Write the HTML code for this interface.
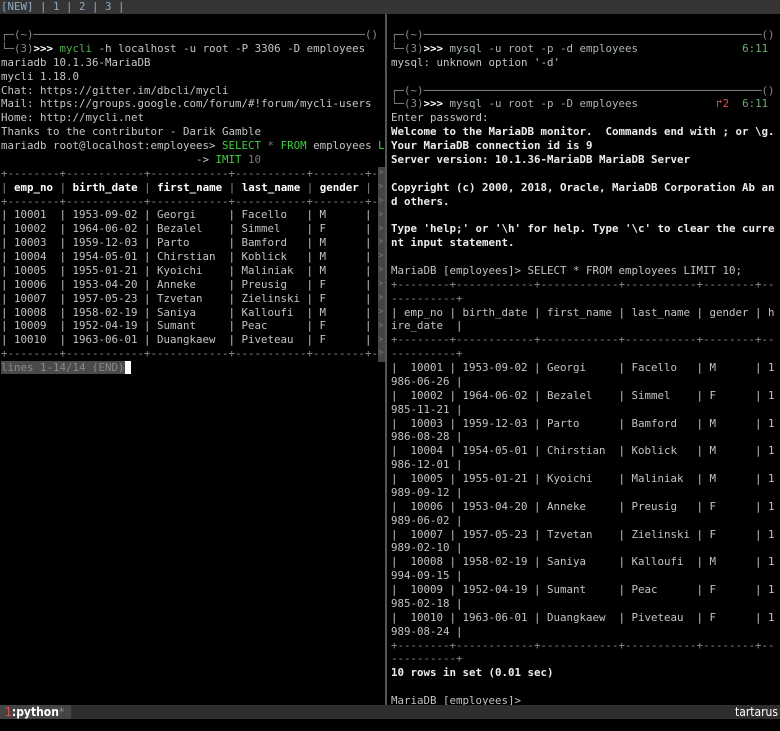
<!DOCTYPE html>
<html><head><meta charset="utf-8"><style>
html,body{margin:0;padding:0;background:#000;width:780px;height:731px;overflow:hidden}
body{position:relative;font-family:"DejaVu Sans Mono","Liberation Mono",monospace;font-size:10.8px;color:#c4c4c4}
pre{margin:0;font:inherit;line-height:13.88px;white-space:pre;position:absolute}
#top{position:absolute;left:0;top:0;width:780px;height:14px;background:#353535;color:#8fa8c0;line-height:14px;padding-left:1px;white-space:pre}
#left{left:1px;top:28px;width:383px;overflow:hidden}
#right{left:391px;top:28px}
.g{color:#8a8a8a}.w{color:#fff;font-weight:bold}.gr{color:#4fae4f}.sg{color:#3fd03f}.d{color:#7a7a7a}
.b{color:#ececec;font-weight:bold}.m{color:#a9b6ad}.r{color:#e05050}.t{color:#6cae6c}.tb{color:#8c8c8c}
#sb{position:absolute;left:378px;top:167px;width:7px;height:195px;background:#444;color:#777;font-size:9px;line-height:13.88px;overflow:hidden}
#div{position:absolute;left:385px;top:14px;width:2px;height:691px;background:#555}
#status{position:absolute;left:0;top:705px;width:780px;height:14px;background:#2e2e2e;line-height:14px;font-family:"DejaVu Sans Condensed","Liberation Sans Narrow",sans-serif;font-size:12px;color:#fff}
#seg{position:absolute;left:0;top:0;width:71px;height:14px;background:#444;padding-left:5px;box-sizing:border-box;font-weight:bold}
</style></head><body>
<div id="top">[NEW] | 1 | 2 | 3 |</div>
<pre id="left"><span class="g">┌─(~)───────────────────────────────────────────────────()</span>
<span class="g">└─(3)</span><span class="w">&gt;&gt;&gt;</span> <span class="gr">mycli</span> -h localhost -u root -P 3306 -D employees
mariadb 10.1.36-MariaDB
mycli 1.18.0
Chat: https://gitter.im/dbcli/mycli
Mail: https://groups.google.com/forum/#!forum/mycli-users
Home: http://mycli.net
Thanks to the contributor - Darik Gamble
mariadb root@localhost:employees&gt; <span class="sg">SELECT</span> <span class="d">*</span> <span class="sg">FROM</span> employees <span class="sg">L</span>
                              -&gt; <span class="sg">IMIT</span> <span class="d">10</span>
<span class="tb">+--------+------------+------------+-----------+--------+-</span>
<span class="tb">|</span> <span class="w">emp_no</span> <span class="tb">|</span> <span class="w">birth_date</span> <span class="tb">|</span> <span class="w">first_name</span> <span class="tb">|</span> <span class="w">last_name</span> <span class="tb">|</span> <span class="w">gender</span> <span class="tb">|</span>
<span class="tb">+--------+------------+------------+-----------+--------+-</span>
| 10001  | 1953-09-02 | Georgi     | Facello   | M      |
| 10002  | 1964-06-02 | Bezalel    | Simmel    | F      |
| 10003  | 1959-12-03 | Parto      | Bamford   | M      |
| 10004  | 1954-05-01 | Chirstian  | Koblick   | M      |
| 10005  | 1955-01-21 | Kyoichi    | Maliniak  | M      |
| 10006  | 1953-04-20 | Anneke     | Preusig   | F      |
| 10007  | 1957-05-23 | Tzvetan    | Zielinski | F      |
| 10008  | 1958-02-19 | Saniya     | Kalloufi  | M      |
| 10009  | 1952-04-19 | Sumant     | Peac      | F      |
| 10010  | 1963-06-01 | Duangkaew  | Piveteau  | F      |
<span class="tb">+--------+------------+------------+-----------+--------+-</span>
<span style="background:#4a4a4a;color:#8a8a8a">lines 1-14/14 (END)</span><span style="background:#fff"> </span></pre>
<div id="sb">&gt;<br>&gt;<br>&gt;<br>&gt;<br>&gt;<br>&gt;<br>&gt;<br>&gt;<br>&gt;<br>&gt;<br>&gt;<br>&gt;<br>&gt;<br>&gt;</div>
<div id="div"></div>
<pre id="right"><span class="g">┌─(~)────────────────────────────────────────────────────()</span>
<span class="g">└─(3)</span><span class="w">&gt;&gt;&gt;</span> <span class="m">mysql -u root -p -d employees</span>                <span class="t">6:11</span>
mysql: unknown option '-d'

<span class="g">┌─(~)────────────────────────────────────────────────────()</span>
<span class="g">└─(3)</span><span class="w">&gt;&gt;&gt;</span> <span class="m">mysql -u root -p -D employees</span>            <span class="r">↱2</span>  <span class="t">6:11</span>
Enter password:
<span class="b">Welcome to the MariaDB monitor.  Commands end with ; or \g.</span>
<span class="b">Your MariaDB connection id is 9</span>
<span class="b">Server version: 10.1.36-MariaDB MariaDB Server</span>

<span class="b">Copyright (c) 2000, 2018, Oracle, MariaDB Corporation Ab an</span>
<span class="b">d others.</span>

<span class="b">Type 'help;' or '\h' for help. Type '\c' to clear the curre</span>
<span class="b">nt input statement.</span>

MariaDB [employees]&gt; SELECT * FROM employees LIMIT 10;
<span class="tb">+--------+------------+------------+-----------+--------+--
----------+</span>
| emp_no | birth_date | first_name | last_name | gender | h
ire_date  |
<span class="tb">+--------+------------+------------+-----------+--------+--
----------+</span>
|  10001 | 1953-09-02 | Georgi     | Facello   | M      | 1
986-06-26 |
|  10002 | 1964-06-02 | Bezalel    | Simmel    | F      | 1
985-11-21 |
|  10003 | 1959-12-03 | Parto      | Bamford   | M      | 1
986-08-28 |
|  10004 | 1954-05-01 | Chirstian  | Koblick   | M      | 1
986-12-01 |
|  10005 | 1955-01-21 | Kyoichi    | Maliniak  | M      | 1
989-09-12 |
|  10006 | 1953-04-20 | Anneke     | Preusig   | F      | 1
989-06-02 |
|  10007 | 1957-05-23 | Tzvetan    | Zielinski | F      | 1
989-02-10 |
|  10008 | 1958-02-19 | Saniya     | Kalloufi  | M      | 1
994-09-15 |
|  10009 | 1952-04-19 | Sumant     | Peac      | F      | 1
985-02-18 |
|  10010 | 1963-06-01 | Duangkaew  | Piveteau  | F      | 1
989-08-24 |
<span class="tb">+--------+------------+------------+-----------+--------+--
----------+</span>
<span class="b">10 rows in set (0.01 sec)</span>

MariaDB [employees]&gt;</pre>
<div id="status"><div id="seg"><span style="color:#e05050;font-weight:normal">1</span>:python<span style="color:#7a9a8a;font-weight:normal">*</span></div><span style="position:absolute;right:2px;top:0">tartarus</span></div>
</body></html>
